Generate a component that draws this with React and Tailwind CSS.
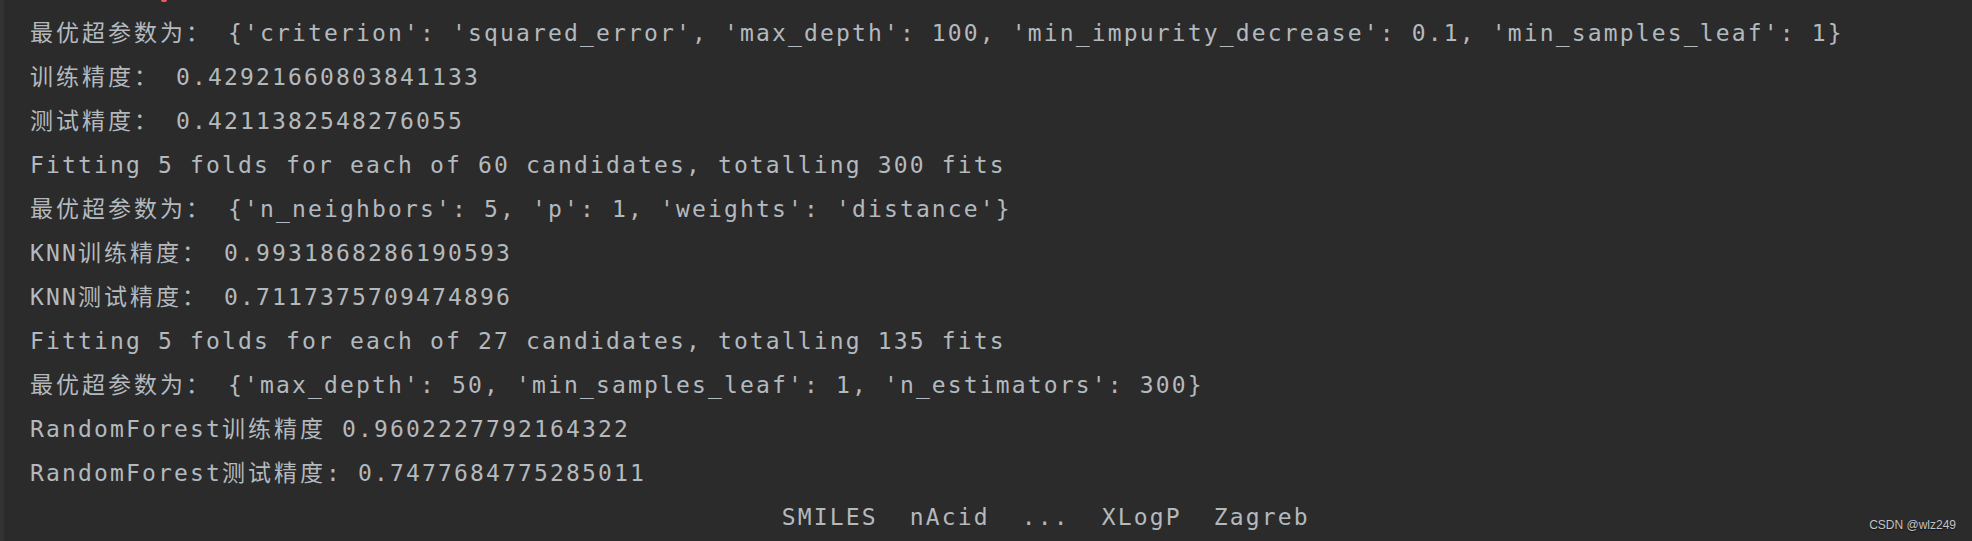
const lines = [
    "最优超参数为： {'criterion': 'squared_error', 'max_depth': 100, 'min_impurity_decrease': 0.1, 'min_samples_leaf': 1}",
    "训练精度： 0.42921660803841133",
    "测试精度： 0.4211382548276055",
    "Fitting 5 folds for each of 60 candidates, totalling 300 fits",
    "最优超参数为： {'n_neighbors': 5, 'p': 1, 'weights': 'distance'}",
    "KNN训练精度： 0.9931868286190593",
    "KNN测试精度： 0.7117375709474896",
    "Fitting 5 folds for each of 27 candidates, totalling 135 fits",
    "最优超参数为： {'max_depth': 50, 'min_samples_leaf': 1, 'n_estimators': 300}",
    "RandomForest训练精度 0.9602227792164322",
    "RandomForest测试精度: 0.7477684775285011",
    " ".repeat(47) + "SMILES  nAcid  ...  XLogP  Zagreb",
];

// split a line into latin / cjk runs so each gets its own metrics
function Line({ text }) {
    const parts = text.split(/([\u3000-\u9fff\uff00-\uffef]+)/).filter(Boolean);
    return (
        <div className="h-[44px] leading-[44px] whitespace-pre">
            {parts.map((p, i) =>
                /[\u3000-\u9fff\uff00-\uffef]/.test(p) ? (
                    <span key={i} className="font-['Noto_Sans_CJK_SC',sans-serif] text-[23px] leading-none tracking-[3px]">
                        {p}
                    </span>
                ) : (
                    <span key={i}>{p}</span>
                )
            )}
        </div>
    );
}

export default function App() {
    return (
        <div className="relative w-[1972px] h-[541px] bg-[#2b2b2b] flex overflow-hidden">
            <div className="w-[4px] h-full bg-[#313335]" />
            <div className="absolute left-[161px] top-0 w-[6px] h-[2px] bg-[#f05a5a] rounded-b-sm" />

            <div className="flex-1 pl-[26px] pt-[11px] text-[#b4b9be] text-[23px] tracking-[2.15px] font-['DejaVu_Sans_Mono','Noto_Sans_CJK_SC',monospace]">
                {lines.map((l, i) => (
                    <Line key={i} text={l} />
                ))}
            </div>

            <div className="absolute right-[16px] bottom-[7px] text-[12px] text-[#c4c4c4] font-['Liberation_Sans',Arial,sans-serif] [text-shadow:0_1px_1px_rgba(0,0,0,0.6)]">
                CSDN @wlz249
            </div>
        </div>
    );
}
